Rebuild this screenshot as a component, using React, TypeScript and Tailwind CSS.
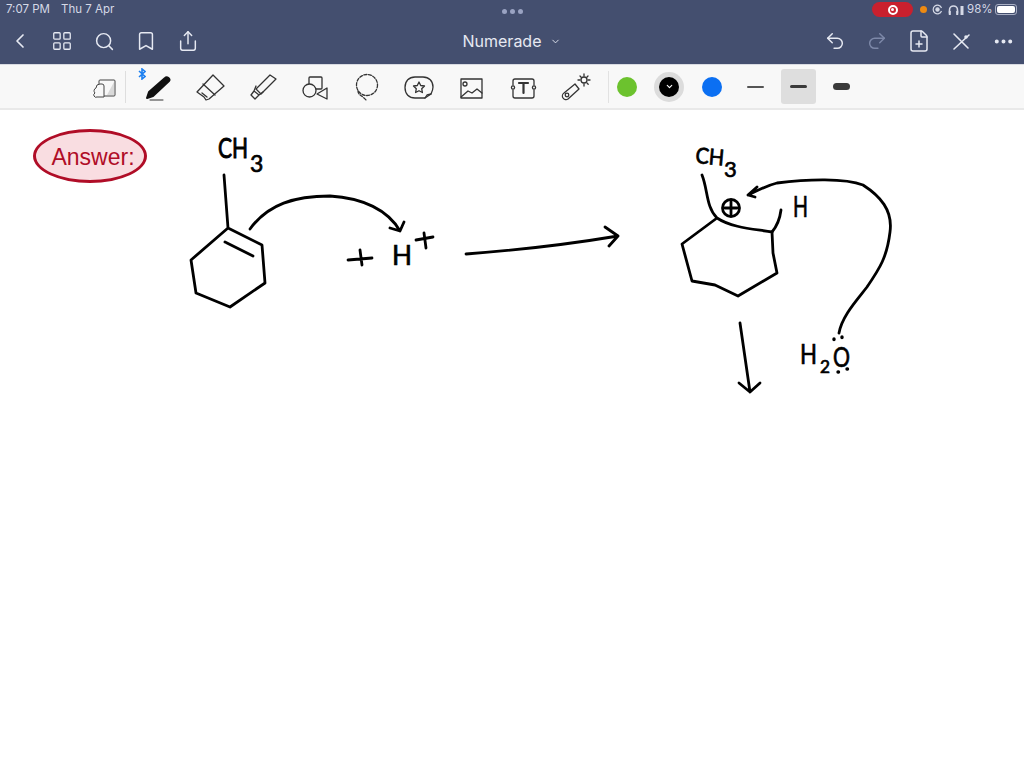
import { Bookmark, ChevronDown, ChevronLeft, FilePlus, LayoutGrid, MoreHorizontal, Redo2, Search, Share, Undo2 } from "lucide-react";

const ink = "fill-none stroke-black stroke-[2.8px] [stroke-linecap:round] [stroke-linejoin:round]";
const handText = "fill-black stroke-black stroke-[0.7px] font-['Lato',sans-serif]";

const NavIcon = ({ children, className = "" }: { children: React.ReactNode; className?: string }) => (
  <div className={`w-[42px] flex justify-center items-center ${className}`}>{children}</div>
);

const ToolIcon = ({ children }: { children: React.ReactNode }) => (
  <div className="w-[52px] h-[44px] flex justify-center items-center">
    <svg width="36" height="36" viewBox="0 0 36 36" fill="none" stroke="#333" strokeWidth="1.3" strokeLinejoin="round" strokeLinecap="round">
      {children}
    </svg>
  </div>
);

const StatusBar = () => (
  <div className="h-[19px] flex items-center justify-between pl-[6px] pr-[7px] text-[11.5px] text-[#d5d9e6] relative">
    <div className="flex gap-[11px] mt-px">
      <span>7:07 PM</span>
      <span>Thu 7 Apr</span>
    </div>
    <div className="absolute left-[502px] top-[9px] flex gap-[3px]">
      <span className="w-[5px] h-[5px] rounded-full bg-[#9aa3c2]" />
      <span className="w-[5px] h-[5px] rounded-full bg-[#9aa3c2]" />
      <span className="w-[5px] h-[5px] rounded-full bg-[#9aa3c2]" />
    </div>
    <div className="flex items-center">
      <div className="w-[41px] h-[15px] rounded-full bg-[#c9202e] flex items-center justify-center">
        <div className="w-[10px] h-[10px] rounded-full border-2 border-white flex items-center justify-center">
          <span className="w-[3px] h-[3px] rounded-full bg-white" />
        </div>
      </div>
      <span className="ml-[7px] w-[7px] h-[7px] rounded-full bg-[#ee8a12]" />
      <svg className="ml-[5px]" width="11" height="11" viewBox="0 0 11 11" fill="none" stroke="#d5d9e6" strokeWidth="1.2">
        <path d="M9.5 4a4.3 4.3 0 1 0 0 3" />
        <circle cx="5.5" cy="5.5" r="1.6" fill="#d5d9e6" />
      </svg>
      <svg className="ml-[5px]" width="16" height="12" viewBox="0 0 16 12" fill="none" stroke="#d5d9e6" strokeWidth="1.6">
        <path d="M1.5 9.5V6a4 4 0 0 1 8 0v3.5" />
        <rect x="0.8" y="7" width="2" height="4" fill="#d5d9e6" stroke="none" />
        <rect x="8.2" y="7" width="2" height="4" fill="#d5d9e6" stroke="none" />
        <rect x="12.5" y="2" width="3" height="9" fill="#d5d9e6" stroke="none" />
      </svg>
      <span className="ml-[3px] w-[25px]">98%</span>
      <div className="ml-[3px] w-[22px] h-[11px] rounded-[3px] border border-[#a9afc4] p-px">
        <div className="h-full w-full rounded-[2px] bg-white" />
      </div>
    </div>
  </div>
);

const NavBar = () => (
  <div className="h-[45px] flex items-center relative text-[#e6e9f2] pb-[1px]">
    <div className="flex -ml-px">
      <NavIcon><ChevronLeft size={24} strokeWidth={1.7} /></NavIcon>
      <NavIcon><LayoutGrid size={22} strokeWidth={1.4} /></NavIcon>
      <NavIcon><Search size={21} strokeWidth={1.7} /></NavIcon>
      <NavIcon><Bookmark size={22} strokeWidth={1.6} /></NavIcon>
      <NavIcon><Share size={22} strokeWidth={1.6} /></NavIcon>
    </div>
    <div className="flex-1 flex justify-center items-center gap-[8px]">
      <span className="text-[16px]">Numerade</span>
      <ChevronDown size={11} strokeWidth={2} />
    </div>
    <div className="flex">
      <NavIcon><Undo2 size={22} strokeWidth={1.6} /></NavIcon>
      <NavIcon><Redo2 size={22} strokeWidth={1.6} className="text-[#7d88a8]" /></NavIcon>
      <NavIcon><FilePlus size={24} strokeWidth={1.5} /></NavIcon>
      <NavIcon>
        <svg width="20" height="20" viewBox="0 0 20 20" fill="none" stroke="currentColor" strokeWidth="1.6" strokeLinecap="round">
          <path d="M3 3l14 14M18 4L3 18" />
          <circle cx="15" cy="6" r="1" fill="currentColor" />
        </svg>
      </NavIcon>
      <NavIcon><MoreHorizontal size={23} strokeWidth={2.2} /></NavIcon>
    </div>
  </div>
);

const Toolbar = () => (
  <div className="h-[46px] bg-[#f8f8f8] border-t border-[#d9dbe2] border-b-2 border-b-[#e9e9e9] flex items-center pl-[92px] relative">
    <svg width="24" height="24" viewBox="0 0 24 24" fill="none" stroke="#454545" strokeWidth="1">
      <rect x="7" y="5" width="16" height="16" rx="1" />
      <path d="M15 20L22 7v13z" fill="#d9d9d9" stroke="none" />
      <path d="M3 18a3 3 0 0 1 1-5a4 4 0 0 1 4-4h2a2 2 0 0 1 2 2v11H5a2 2 0 0 1-2-4z" fill="#f8f8f8" />
    </svg>
    <div className="ml-[9px] w-px h-[32px] bg-[#dedede]" />
    <div className="flex ml-[7px]">
      <div className="relative">
        <ToolIcon>
          <path d="M6 29l2-6L24 9c2-2 6 1 4 3L12 27z" fill="#111" stroke="#111" strokeWidth="2" />
          <path d="M9 31h13" strokeWidth="1" />
        </ToolIcon>
        <svg className="absolute left-[5px] top-[3px]" width="8" height="12" viewBox="0 0 8 12" fill="none" stroke="#1c7ff0" strokeWidth="1.6">
          <path d="M1 3l6 5.5L4 11V1l3 2.5L1 9" />
        </svg>
      </div>
      <ToolIcon>
        <path d="M20 6l11 11-15 13-3 1-2-3-7-5z" />
        <path d="M10 15l12 11M9 24l5 4" />
      </ToolIcon>
      <ToolIcon>
        <path d="M25 6l6 4-15 15-5-5z" />
        <path d="M11 17l-2 5 5 4 4-3M9 22l-3 4 4 4 4-4" />
      </ToolIcon>
      <ToolIcon>
        <rect x="12" y="8" width="13" height="12" rx="1" />
        <circle cx="12.500" cy="21.500" r="6.500" fill="#f8f8f8" />
        <path d="M30 19v11l-10-5z" />
      </ToolIcon>
      <ToolIcon>
        <circle cx="18" cy="16" r="10.500" strokeDasharray="3 1.6" />
        <path d="M9 22c0 4 5 5 8 9" strokeDasharray="3 1.6" />
      </ToolIcon>
      <ToolIcon>
        <path d="M24 29H14C8 29 4 25 4 18.500 4 12 8 8 14 8h8c6 0 10 4 10 10 0 3-1 5-2 7z" />
        <path d="M18 13l1.700 3.500 3.800.5-2.800 2.700.7 3.800-3.400-1.800-3.400 1.800.7-3.800-2.800-2.700 3.800-.5z" />
        <path d="M30 25l-4 1-2 3" />
      </ToolIcon>
      <ToolIcon>
        <rect x="8" y="10" width="21" height="19" />
        <circle cx="12" cy="15" r="2" />
        <path d="M8 28l7-6 4 2 5-4 5 4" />
      </ToolIcon>
      <ToolIcon>
        <path d="M8 16v-4a2 2 0 0 1 2-2h17a2 2 0 0 1 2 2v4M8 21v6a2 2 0 0 0 2 2h17a2 2 0 0 0 2-2v-6" />
        <circle cx="8" cy="18.500" r="1.600" />
        <circle cx="29" cy="18.500" r="1.600" />
        <path d="M14 14h9M18.500 14v10" stroke="#333" strokeWidth="2.200" />
      </ToolIcon>
      <ToolIcon>
        <path d="M7 24L18 15l4 5L11 30a3 3 0 0 1-4-6z" />
        <circle cx="10" cy="26" r="1.800" />
        <circle cx="27" cy="11" r="3" />
        <path d="M27 5v2M27 15v2M21 11h2M31 11h2M23 7l1.200 1.200M30 14l1.200 1.200M31 7l-1.200 1.200" />
      </ToolIcon>
    </div>
    <div className="ml-[7px] w-px h-[32px] bg-[#e2e2e2]" />
    <div className="ml-[8px] w-5 h-5 rounded-full bg-[#6cc22e]" />
    <div className="ml-[17px] w-[30px] h-[30px] rounded-full bg-[#dcdcdc] flex justify-center items-center">
      <div className="w-5 h-5 rounded-full bg-black flex justify-center items-center">
        <ChevronDown size={9} strokeWidth={3} className="text-white" />
      </div>
    </div>
    <div className="ml-[18px] w-5 h-5 rounded-full bg-[#0b6ff2]" />
    <div className="ml-[25px] w-[17px] h-[2px] rounded-full bg-[#555]" />
    <div className="ml-[17px] w-[35px] h-[35px] rounded-[3px] bg-[#dedede] flex items-center justify-center">
      <div className="w-[17px] h-[3px] rounded-full bg-[#3a3a3a]" />
    </div>
    <div className="ml-[17px] w-[17px] h-[7px] rounded-full bg-[#3a3a3a]" />
  </div>
);

const Canvas = () => (
  <div className="flex-1 relative bg-white">
    <svg className="absolute inset-0 w-full h-full" viewBox="0 110 1024 658">
      {/* left molecule */}
      <path className={ink} d="M224 175L228 228L262 245L265 283L230 307L196 293L191 260L228 228" />
      <path className={ink} d="M225 242L253 256" />
      <path className={ink} d="M250 229C268 204 295 196 330 196C363 198 388 210 400 231M390 228L400 231L404 222" />
      <path className={ink} d="M348 260L372 258M360 250L362 265" />
      <path className={ink} d="M466 254C520 250 570 244 618 236M605 227L618 236L609 246" />
      <path className={ink} d="M416 240L433 237M424 233L426 248" />
      <text className={handText} fontSize="21" transform="translate(218 158) scale(1 1.3)">CH</text>
      <text className={handText} x="250" y="172" fontSize="23">3</text>
      <text className={handText} x="392" y="265" fontSize="27" textLength="20" lengthAdjust="spacingAndGlyphs">H</text>
      {/* right molecule */}
      <path className={ink} d="M702 175C708 190 706 207 717 218L682 244L692 281L715 285L738 296L777 273L773 253L772 232C755 229 732 228 717 218" />
      <path className={ink} d="M772 232C777 226 780 218 781 210" />
      <circle className={ink} cx="731" cy="208" r="8.500" />
      <path className={ink} d="M725 208H737M731 202V214" />
      <path className={ink} d="M839 333C842 316 857 300 867 287C880 268 887 257 890 232C893 210 880 196 863 185C845 178 808 179 777 183C765 186 757 191 748 195M757 187L748 195L755 197" />
      <path className={ink} d="M740 323L750 392M739 383L750 392L760 383" />
      <text className={handText} fontSize="20" transform="translate(695 163) rotate(5) scale(1 1.1)">CH</text>
      <text className={handText} x="724" y="177" fontSize="22">3</text>
      <text className={handText} fontSize="27">
        <tspan x="800" y="364" textLength="17" lengthAdjust="spacingAndGlyphs">H</tspan>
        <tspan x="820" y="373" fontSize="17" textLength="10" lengthAdjust="spacingAndGlyphs">2</tspan>
        <tspan x="833" y="367" textLength="17" lengthAdjust="spacingAndGlyphs">O</tspan>
      </text>
      <text className={handText} x="793" y="217" fontSize="29" textLength="15" lengthAdjust="spacingAndGlyphs">H</text>
      <path className="fill-none stroke-black stroke-[3.4px] [stroke-linecap:round]" d="M834 339v.5M842 337v.5M838 372h.5M847 369h.5" />
    </svg>
    <div className="absolute left-[33px] top-[19px] w-[114px] h-[54px] rounded-[50%] border-[3px] border-[#b00d27] bg-[#f9dde1] flex items-center justify-center pt-[2px] pl-[6px] text-[23px] text-[#b00d27] font-['Liberation_Sans',sans-serif]">
      Answer:
    </div>
  </div>
);

export default function App() {
  return (
    <div className="w-[1024px] h-[768px] flex flex-col overflow-hidden font-['Inter',sans-serif]">
      <div className="bg-[#444f6f]">
        <StatusBar />
        <NavBar />
      </div>
      <Toolbar />
      <Canvas />
    </div>
  );
}
